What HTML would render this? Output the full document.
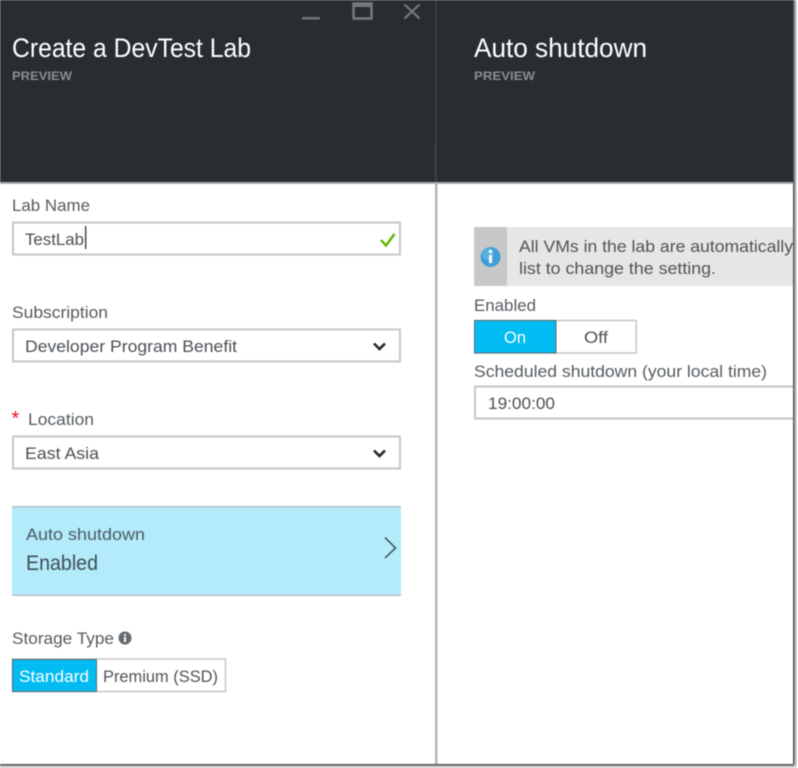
<!DOCTYPE html>
<html><head><meta charset="utf-8"><title>Create a DevTest Lab</title>
<style>
html,body{margin:0;padding:0;background:#fff;width:798px;height:768px;overflow:hidden}
svg{display:block;filter:blur(.45px)}
text{font-family:"Liberation Sans",sans-serif;fill:#555b60;font-size:17px}
</style></head><body>
<svg width="798" height="768" viewBox="0 0 798 768" xmlns="http://www.w3.org/2000/svg">
<rect width="798" height="768" fill="#fff"/>
<!-- headers -->
<rect x="0" y="0" width="794" height="182" fill="#282d31"/>
<rect x="0" y="182" width="794" height="2" fill="#a9abad"/>
<!-- dividers -->
<rect x="435" y="0" width="2" height="142" fill="#363b3f"/>
<rect x="434.500" y="142" width="2.500" height="40" fill="#3a3f42"/>
<rect x="435" y="184" width="2.500" height="580" fill="#b4b4b4"/>
<!-- window controls -->
<rect x="302" y="17" width="18" height="2.500" fill="#6f7376"/>
<rect x="353.500" y="3.500" width="18" height="15" fill="none" stroke="#767a7d" stroke-width="2.500"/>
<rect x="353" y="3" width="19" height="4" fill="#767a7d"/>
<path d="M404.500 4.500L419.500 18.500M419.500 4.500L404.500 18.500" stroke="#767a7d" stroke-width="2.200" fill="none"/>
<!-- titles -->
<text x="12" y="57" style="font-size:27px;fill:#fff" textLength="239" lengthAdjust="spacingAndGlyphs">Create a DevTest Lab</text>
<text x="12" y="80" style="font-size:12px;font-weight:bold;fill:#8b8f92" textLength="60" lengthAdjust="spacingAndGlyphs">PREVIEW</text>
<text x="474" y="57" style="font-size:27px;fill:#fff" textLength="173" lengthAdjust="spacingAndGlyphs">Auto shutdown</text>
<text x="474" y="80" style="font-size:12px;font-weight:bold;fill:#8b8f92" textLength="61" lengthAdjust="spacingAndGlyphs">PREVIEW</text>
<!-- lab name -->
<text x="12" y="211" textLength="78" lengthAdjust="spacingAndGlyphs">Lab Name</text>
<rect x="13" y="222.500" width="387" height="32" fill="#fff" stroke="#c6c6c6" stroke-width="2"/>
<text x="25" y="245" style="fill:#4b5055" textLength="59" lengthAdjust="spacingAndGlyphs">TestLab</text>
<rect x="85" y="226" width="1.400" height="23" fill="#3a3f44"/>
<path d="M381 240L386 245.500L394.500 234" fill="none" stroke="#5db300" stroke-width="2.400"/>
<!-- subscription -->
<text x="12" y="318" textLength="96" lengthAdjust="spacingAndGlyphs">Subscription</text>
<rect x="13" y="329.500" width="387" height="32" fill="#fff" stroke="#c6c6c6" stroke-width="2"/>
<text x="25" y="352" style="fill:#4b5055" textLength="212" lengthAdjust="spacingAndGlyphs">Developer Program Benefit</text>
<path d="M374 343.500L379.500 349L385 343.500" fill="none" stroke="#23282c" stroke-width="2.600"/>
<!-- location -->
<text x="11.500" y="425" style="font-size:20px;fill:#f0142c">*</text>
<text x="28" y="425" textLength="66" lengthAdjust="spacingAndGlyphs">Location</text>
<rect x="13" y="436.500" width="387" height="32" fill="#fff" stroke="#c6c6c6" stroke-width="2"/>
<text x="25" y="459" style="fill:#4b5055" textLength="74" lengthAdjust="spacingAndGlyphs">East Asia</text>
<path d="M374 450.500L379.500 456L385 450.500" fill="none" stroke="#23282c" stroke-width="2.600"/>
<!-- auto shutdown tile -->
<rect x="12" y="506" width="389" height="90" fill="#b3ebfb"/>
<rect x="12" y="506" width="389" height="1.500" fill="#b2c3c9"/>
<rect x="12" y="594.500" width="389" height="1.500" fill="#aebfc5"/>
<text x="26" y="540" style="fill:#4b5a62" textLength="119" lengthAdjust="spacingAndGlyphs">Auto shutdown</text>
<text x="26" y="570" style="font-size:21px;fill:#3f4f57" textLength="72" lengthAdjust="spacingAndGlyphs">Enabled</text>
<path d="M385 537.500L395.500 548L385 558" fill="none" stroke="#3c4a52" stroke-width="1.500"/>
<!-- storage type -->
<text x="12" y="644" textLength="102" lengthAdjust="spacingAndGlyphs">Storage Type</text>
<circle cx="125" cy="638" r="6.500" fill="#666b6f"/>
<rect x="124" y="637" width="2" height="5" fill="#fff"/>
<rect x="124" y="634" width="2" height="2" fill="#fff"/>
<rect x="12.500" y="659" width="213" height="32.500" fill="#fff" stroke="#c6c6c6" stroke-width="1.500"/>
<rect x="12.500" y="659.500" width="84" height="32" fill="#00bcf2" stroke="#5c6b72" stroke-width="1"/>
<text x="19" y="682" style="fill:#fff" textLength="70" lengthAdjust="spacingAndGlyphs">Standard</text>
<text x="103" y="682" style="fill:#4f5458" textLength="115" lengthAdjust="spacingAndGlyphs">Premium (SSD)</text>
<!-- info box -->
<rect x="474" y="227" width="320" height="59" fill="#e6e6e6"/>
<rect x="474" y="227" width="33" height="59" fill="#c8c8c8"/>
<circle cx="490.500" cy="257" r="10" fill="#3f9fd4"/>
<circle cx="488" cy="254" r="6" fill="#6dbde6" opacity=".6"/>
<rect x="489" y="255" width="3" height="8" fill="#fff"/>
<rect x="489" y="250" width="3" height="3" fill="#fff"/>
<text x="519" y="252" style="fill:#4f5458" textLength="274" lengthAdjust="spacingAndGlyphs">All VMs in the lab are automatically</text>
<text x="519" y="274" style="fill:#4f5458" textLength="197" lengthAdjust="spacingAndGlyphs">list to change the setting.</text>
<!-- enabled -->
<text x="474" y="311" textLength="62" lengthAdjust="spacingAndGlyphs">Enabled</text>
<rect x="474.750" y="320.500" width="161.500" height="32.500" fill="#fff" stroke="#c6c6c6" stroke-width="1.500"/>
<rect x="474.500" y="320.500" width="81.500" height="32.500" fill="#00bcf2" stroke="#5c6b72" stroke-width="1"/>
<text x="504" y="343" style="fill:#fff" textLength="22" lengthAdjust="spacingAndGlyphs">On</text>
<text x="584" y="343" style="fill:#4f5458" textLength="24" lengthAdjust="spacingAndGlyphs">Off</text>
<!-- scheduled -->
<text x="474" y="377" textLength="293" lengthAdjust="spacingAndGlyphs">Scheduled shutdown (your local time)</text>
<rect x="475" y="386.500" width="330" height="32" fill="#fff" stroke="#c6c6c6" stroke-width="2"/>
<text x="488" y="409" style="fill:#4b5055" textLength="67" lengthAdjust="spacingAndGlyphs">19:00:00</text>
<!-- outer edge -->
<rect x="794" y="0" width="4" height="768" fill="#fff"/>
<rect x="793" y="0" width="1.500" height="764" fill="#55595c"/>
<rect x="794.500" y="0" width="2" height="766" fill="#b5b5b5"/>
<rect x="0" y="764" width="794" height="1.500" fill="#55595c"/>
<rect x="0" y="765.500" width="796" height="2" fill="#c0c0c0"/>
</svg>
</body></html>
